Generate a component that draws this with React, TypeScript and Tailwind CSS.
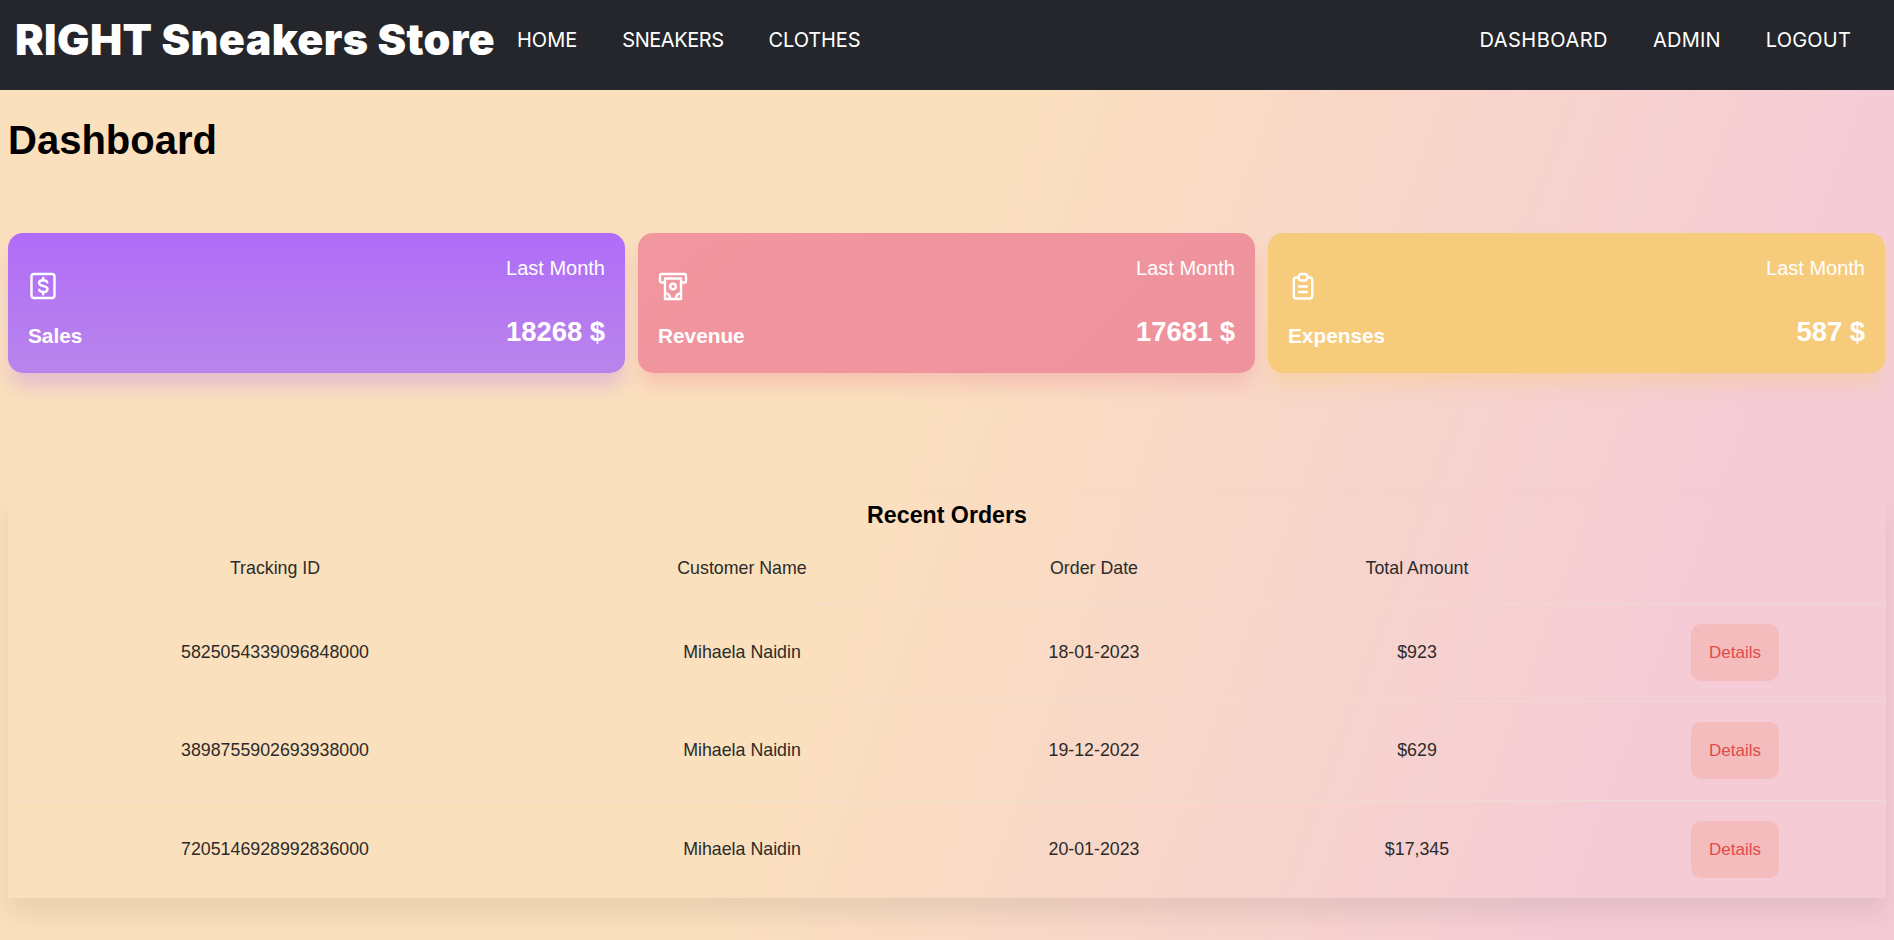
const orders = [
  { id: "5825054339096848000", name: "Mihaela Naidin", date: "18-01-2023", total: "$923" },
  { id: "3898755902693938000", name: "Mihaela Naidin", date: "19-12-2022", total: "$629" },
  { id: "7205146928992836000", name: "Mihaela Naidin", date: "20-01-2023", total: "$17,345" },
]

const rowCols = "grid grid-cols-[534px_400px_304px_342px_1fr] items-center text-center"

function DollarIcon() {
  return (
    <svg width="30" height="30" viewBox="0 0 30 30" fill="none" stroke="currentColor" strokeWidth="2.4" strokeLinecap="round" strokeLinejoin="round">
      <rect x="3.5" y="3" width="23" height="24" rx="2.5" />
      <path d="M19.2 11.3c-.5-1.3-1.9-2.1-3.9-2.1-2.4 0-4.2 1.1-4.2 2.9 0 3.9 8.4 1.9 8.4 5.9 0 1.8-1.8 3-4.2 3-2 0-3.6-.8-4.1-2.2" />
      <path d="M15.2 7v2.2M15.2 21v2.2" />
    </svg>
  )
}

function CashIcon() {
  return (
    <svg width="30" height="30" viewBox="0 0 30 30" fill="none" stroke="currentColor" strokeWidth="2.4" strokeLinecap="round" strokeLinejoin="round">
      <path d="M7 11.5H3.6A1.6 1.6 0 0 1 2 9.9V4.6A1.6 1.6 0 0 1 3.6 3h22.8A1.6 1.6 0 0 1 28 4.6v5.3a1.6 1.6 0 0 1-1.6 1.6H23" />
      <path d="M7 7.5h16V28H7z" />
      <circle cx="15" cy="15.5" r="2.8" />
      <path d="M7 22.5a4 4 0 0 1 4.5 5.5M23 22.5a4 4 0 0 0-4.5 5.5" />
    </svg>
  )
}

function ClipboardIcon() {
  return (
    <svg width="30" height="30" viewBox="0 0 30 30" fill="none" stroke="currentColor" strokeWidth="2.4" strokeLinecap="round" strokeLinejoin="round">
      <path d="M10.5 6.5H8a2.2 2.2 0 0 0-2.2 2.2v16.6A2.2 2.2 0 0 0 8 27.5h14a2.2 2.2 0 0 0 2.2-2.2V8.7A2.2 2.2 0 0 0 22 6.5h-2.5" />
      <rect x="10.5" y="3" width="9" height="6.5" rx="3" />
      <path d="M11 15.5h8M11 21h8" />
    </svg>
  )
}

function StatCard({ title, value, icon, className }: { title: string; value: string; icon: React.ReactNode; className: string }) {
  return (
    <div className={"flex h-[140px] justify-between rounded-[15px] px-5 pt-[23px] text-white " + className}>
      <div className="flex flex-col">
        <div className="mt-[15px] h-[30px]">{icon}</div>
        <h3 className="mt-[23px] text-[20.8px] font-bold leading-[24px]">{title}</h3>
      </div>
      <div className="flex flex-col items-end">
        <span className="text-[20px] leading-[24px]">Last Month</span>
        <span className="mt-[36px] text-[27.4px] font-bold leading-[32px]">{value}</span>
      </div>
    </div>
  )
}

export default function App() {
  return (
    <div className="min-h-screen bg-[linear-gradient(110deg,#fbe0bd_46%,#f5ccd6_85%)] font-['Liberation_Sans',Arial,sans-serif] text-black">
      <header className="flex h-[90px] items-center justify-between bg-[#24262b] pb-[10px] pl-[15px] pr-[43px] text-white">
        <div className="flex items-center">
          <span className="mt-[-2px] w-[502px] whitespace-nowrap font-['Inter',sans-serif] text-[43px] font-black tracking-[0.4px]">RIGHT Sneakers Store</span>
          <nav className="flex gap-[45px] font-['Inter',sans-serif] text-[20px]">
            <a>HOME</a>
            <a className="tracking-[-0.45px]">SNEAKERS</a>
            <a className="tracking-[-0.1px]">CLOTHES</a>
          </nav>
        </div>
        <nav className="flex gap-[45px] font-['Inter',sans-serif] text-[20px]">
          <a className="tracking-[0.5px]">DASHBOARD</a>
          <a className="tracking-[0.2px]">ADMIN</a>
          <a className="tracking-[0.2px]">LOGOUT</a>
        </nav>
      </header>

      <main className="px-2">
        <h1 className="mt-[27px] text-[40px] font-bold leading-[46px]">Dashboard</h1>

        <div className="mt-[70px] grid grid-cols-[617px_617px_617px] gap-[13px]">
          <StatCard
            title="Sales"
            value="18268 $"
            icon={<DollarIcon />}
            className="bg-[linear-gradient(180deg,#b06cf8,#b985eb)] shadow-[0_15px_20px_-3px_rgba(176,108,248,0.32)]"
          />
          <StatCard
            title="Revenue"
            value="17681 $"
            icon={<CashIcon />}
            className="bg-[linear-gradient(135deg,#f1969f,#ee939d)] shadow-[0_15px_20px_-3px_rgba(240,150,160,0.4)]"
          />
          <StatCard
            title="Expenses"
            value="587 $"
            icon={<ClipboardIcon />}
            className="bg-[#f6cb7c] shadow-[0_15px_20px_-3px_rgba(246,203,124,0.4)]"
          />
        </div>

        <section className="mt-[124px] shadow-[0_15px_25px_rgba(0,0,0,0.08)]">
          <h2 className="pt-1 text-center text-[23.2px] font-bold leading-[28px]">Recent Orders</h2>
          <div className={rowCols + " h-[74.5px] border-b border-[#ece0d0]/70 pt-[5px] text-[17.8px] text-[#2b2b2b]"}>
            <div>Tracking ID</div>
            <div>Customer Name</div>
            <div>Order Date</div>
            <div>Total Amount</div>
            <div />
          </div>
          {orders.map((order, i) => (
            <div key={order.id} className={rowCols + " text-[17.8px] text-[#2b2b2b] " + (i < 2 ? "h-[98.5px] border-b border-[#ece0d0]/70" : "h-[97.5px]")}>
              <div>{order.id}</div>
              <div>{order.name}</div>
              <div>{order.date}</div>
              <div>{order.total}</div>
              <div className="flex justify-center pr-1">
                <button className="h-[57px] w-[88px] rounded-[10px] bg-[#f4bcbc] text-[17px] text-[#e24a4a]">Details</button>
              </div>
            </div>
          ))}
        </section>
      </main>
    </div>
  )
}
